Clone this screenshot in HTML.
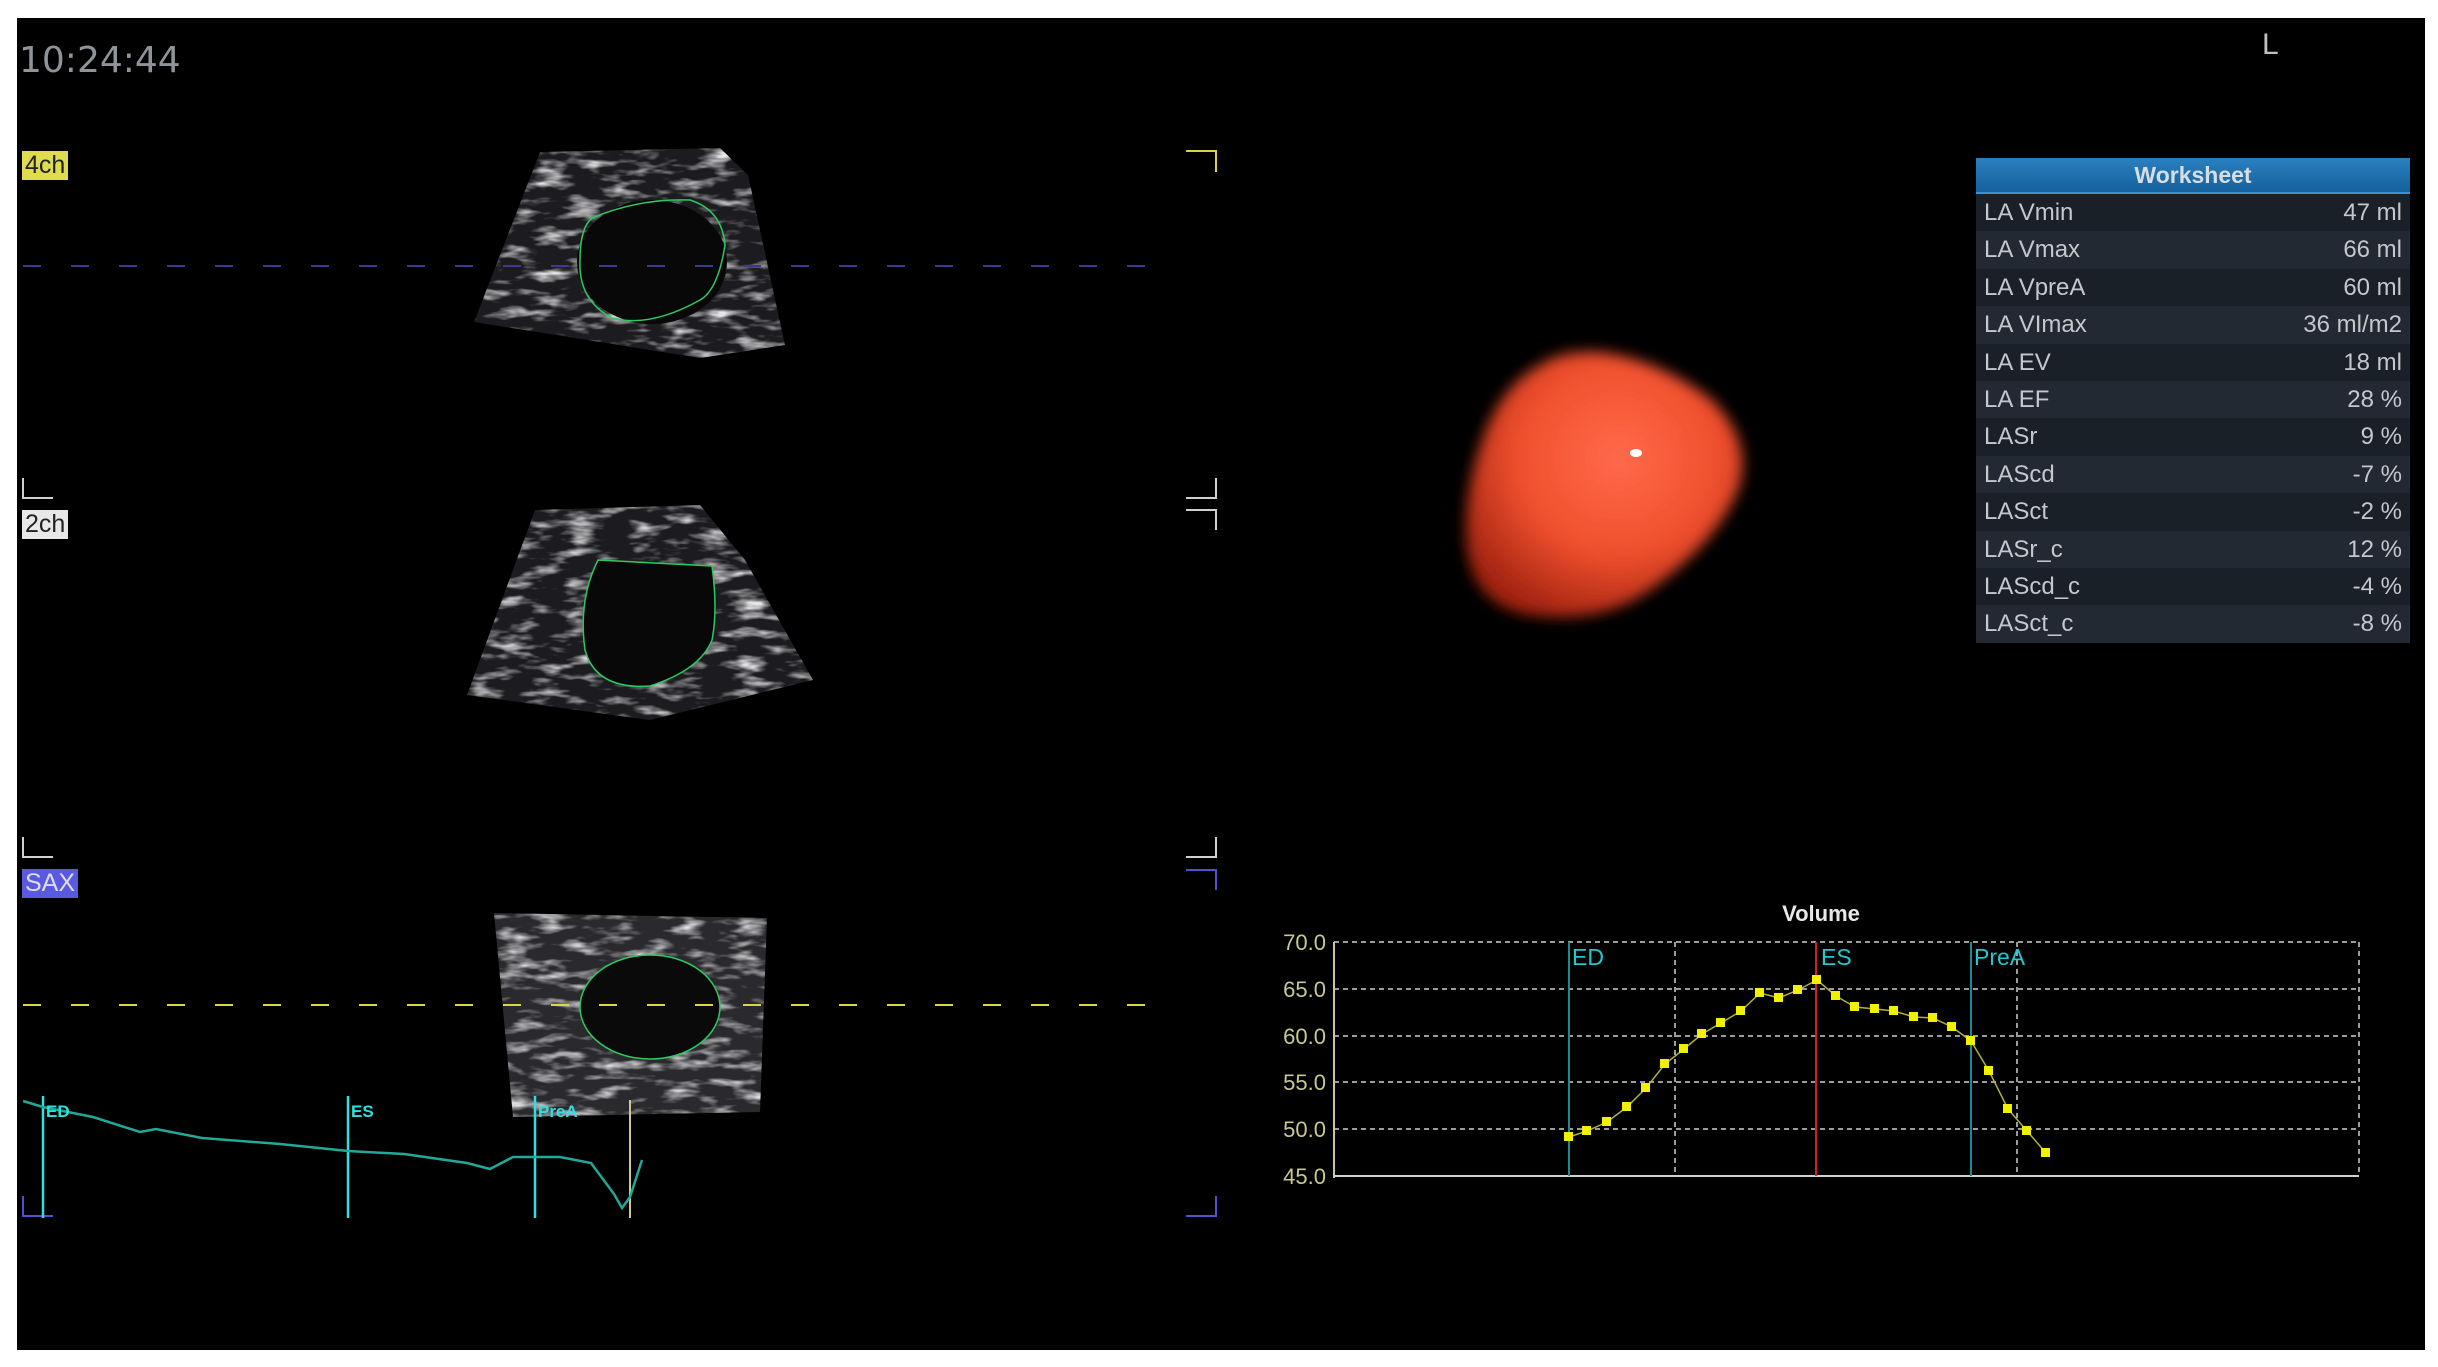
<!DOCTYPE html>
<html><head><meta charset="utf-8"><style>
html,body{margin:0;padding:0;background:#fff;}
#s{position:relative;width:2438px;height:1367px;background:#fff;overflow:hidden;font-family:"Liberation Sans",sans-serif;}
#b{position:absolute;left:17px;top:18px;width:2408px;height:1332px;background:#000;}
.lbl{position:absolute;font-size:25px;line-height:29px;padding:0 3px;color:#222;}
#ws{position:absolute;left:1976px;top:158px;width:434px;}
#ws .h{height:34px;background:linear-gradient(#2a80c0,#15609c);color:#d8dde2;font-weight:bold;text-align:center;font-size:23px;line-height:34px;border-bottom:2px solid #3a90d0;}
#ws .r{height:37.4px;line-height:37.4px;color:#c4c8cc;font-size:24px;padding:0 8px;display:flex;justify-content:space-between;}
#ws .r:nth-child(even){background:#1a2028}
#ws .r:nth-child(odd){background:#222932}
</style></head><body><div id="s"><div id="b"></div>
<svg width="2438" height="1367" style="position:absolute;left:0;top:0">
<defs>
<filter id="n" x="0" y="0" width="100%" height="100%"><feTurbulence type="fractalNoise" baseFrequency="0.03 0.1" numOctaves="3" seed="4"/><feColorMatrix type="matrix" values="0 0 0 0 0.8 0 0 0 0 0.8 0 0 0 0 0.82 0 0 0 2.6 -1.25"/></filter>
<filter id="bl"><feGaussianBlur stdDeviation="7"/></filter>
<radialGradient id="hg" cx="0.55" cy="0.4" r="0.65"><stop offset="0" stop-color="#ff6a4a"/><stop offset="0.55" stop-color="#f0502e"/><stop offset="1" stop-color="#a02210"/></radialGradient>
<clipPath id="c1"><polygon points="540,152 720,148 748,175 785,345 700,358 474,322"/></clipPath>
<clipPath id="c2"><polygon points="535,510 700,505 745,560 813,680 650,720 467,695"/></clipPath>
<clipPath id="c3"><polygon points="494,913 767,918 760,1112 513,1117"/></clipPath>
</defs>
<text x="19" y="72" fill="#8e949a" font-size="36" font-family="DejaVu Sans">10:24:44</text>
<text x="2262" y="54" fill="#c0c0c0" font-size="30" font-family="Liberation Sans">L</text>
<g clip-path="url(#c1)"><rect x="460" y="140" width="340" height="230" fill="#1c1c20"/><rect x="460" y="140" width="340" height="230" filter="url(#n)"/></g>
<ellipse cx="652" cy="262" rx="75" ry="62" fill="#080808"/>
<path d="M592 218 Q640 198 690 200 Q722 210 725 245 Q718 290 700 300 Q650 328 612 318 Q578 300 580 260 Q580 228 592 218Z" fill="none" stroke="#2ec860" stroke-width="1.5"/>
<g clip-path="url(#c2)"><rect x="460" y="500" width="360" height="230" fill="#1c1c20"/><rect x="460" y="500" width="360" height="230" filter="url(#n)"/></g>
<path d="M598 560 L712 566 Q718 610 712 640 Q700 670 650 686 Q596 690 585 650 Q578 600 598 560Z" fill="#080808" stroke="#2ec860" stroke-width="1.5"/>
<g clip-path="url(#c3)"><rect x="490" y="905" width="280" height="220" fill="#2a2a2e"/><rect x="490" y="905" width="280" height="220" filter="url(#n)"/></g>
<ellipse cx="650" cy="1007" rx="70" ry="52" fill="#0a0a0a" stroke="#2ec860" stroke-width="1.5"/>
<line x1="23" y1="266" x2="1174" y2="266" stroke="#3a3a90" stroke-width="2" stroke-dasharray="18 30"/>
<line x1="23" y1="1005" x2="1174" y2="1005" stroke="#d8d840" stroke-width="2" stroke-dasharray="18 30"/>
<g fill="none" stroke-width="2">
<path d="M1186 151 H1216 V172" stroke="#e0d040"/>
<path d="M23 478 V498 H53" stroke="#d0d0d0"/>
<path d="M1186 498 H1216 V478" stroke="#d0d0d0"/>
<path d="M1186 510 H1216 V530" stroke="#d0d0d0"/>
<path d="M23 837 V857 H53" stroke="#d0d0d0"/>
<path d="M1186 857 H1216 V837" stroke="#d0d0d0"/>
<path d="M1186 870 H1216 V890" stroke="#5050d0"/>
<path d="M23 1196 V1216 H53" stroke="#5050d0"/>
<path d="M1186 1216 H1216 V1196" stroke="#5050d0"/>
</g>
<g stroke="#30e0e0" stroke-width="2.5"><line x1="43" y1="1096" x2="43" y2="1218"/><line x1="348" y1="1096" x2="348" y2="1218"/><line x1="535" y1="1096" x2="535" y2="1218"/></g>
<line x1="630" y1="1100" x2="630" y2="1218" stroke="#d0c890" stroke-width="2"/>
<polyline points="23,1101 43,1107 93,1117 140,1132 156,1129 202,1138 280,1144 348,1151 404,1154 467,1163 490,1169 513,1157 560,1157 591,1163 614,1194 622,1208 630,1197 642,1160" fill="none" stroke="#20a898" stroke-width="2.5"/>
<g fill="#30e0e0" font-size="17" font-family="Liberation Sans" font-weight="bold"><text x="46" y="1117">ED</text><text x="351" y="1117">ES</text><text x="538" y="1117">PreA</text></g>
<path d="M1540 365 Q1560 350 1600 352 Q1660 360 1712 400 Q1752 440 1740 485 Q1720 540 1650 590 Q1600 625 1530 615 Q1470 605 1466 540 Q1464 480 1490 420 Q1510 380 1540 365Z" fill="url(#hg)" filter="url(#bl)"/>
<ellipse cx="1636" cy="453" rx="6" ry="4" fill="#fff"/>
<text x="1821" y="921" fill="#e8e8e8" font-size="22" text-anchor="middle" font-family="Liberation Sans" font-weight="bold">Volume</text>
<g stroke="#d0d0d0" stroke-width="1.5" stroke-dasharray="5 4" fill="none">
<line x1="1334" y1="942" x2="2359" y2="942"/><line x1="1334" y1="989" x2="2359" y2="989"/><line x1="1334" y1="1036" x2="2359" y2="1036"/><line x1="1334" y1="1082" x2="2359" y2="1082"/><line x1="1334" y1="1129" x2="2359" y2="1129"/>
<line x1="1675" y1="942" x2="1675" y2="1176"/><line x1="2017" y1="942" x2="2017" y2="1176"/><line x1="2359" y1="942" x2="2359" y2="1176"/>
</g>
<line x1="1334" y1="942" x2="1334" y2="1178" stroke="#c8c890" stroke-width="2"/>
<line x1="1334" y1="1176" x2="2359" y2="1176" stroke="#d0d0d0" stroke-width="2"/>
<g fill="#c8c890" font-size="22" font-family="Liberation Sans" text-anchor="end"><text x="1326" y="950">70.0</text><text x="1326" y="997">65.0</text><text x="1326" y="1044">60.0</text><text x="1326" y="1090">55.0</text><text x="1326" y="1137">50.0</text><text x="1326" y="1184">45.0</text></g>
<line x1="1569" y1="942" x2="1569" y2="1176" stroke="#208890" stroke-width="2"/>
<line x1="1816" y1="942" x2="1816" y2="1176" stroke="#d02020" stroke-width="2"/>
<line x1="1971" y1="942" x2="1971" y2="1176" stroke="#208890" stroke-width="2"/>
<g fill="#20c8d0" font-size="23" font-family="Liberation Sans"><text x="1572" y="965">ED</text><text x="1821" y="965">ES</text><text x="1974" y="965">PreA</text></g>
<polyline points="1569,1137 1587,1131 1607,1122 1627,1107 1646,1088 1665,1064 1684,1049 1702,1034 1721,1023 1741,1011 1760,993 1779,998 1798,990 1817,980 1836,996 1855,1007 1875,1009 1894,1011 1914,1017 1933,1018 1952,1027 1971,1041 1989,1071 2008,1109 2027,1131 2046,1153" fill="none" stroke="#b0b040" stroke-width="1.5"/>
<g fill="#f0f000">
<rect x="1564" y="1132" width="9" height="9"/><rect x="1582" y="1126" width="9" height="9"/><rect x="1602" y="1117" width="9" height="9"/><rect x="1622" y="1102" width="9" height="9"/><rect x="1641" y="1083" width="9" height="9"/><rect x="1660" y="1059" width="9" height="9"/><rect x="1679" y="1044" width="9" height="9"/><rect x="1697" y="1029" width="9" height="9"/><rect x="1716" y="1018" width="9" height="9"/><rect x="1736" y="1006" width="9" height="9"/><rect x="1755" y="988" width="9" height="9"/><rect x="1774" y="993" width="9" height="9"/><rect x="1793" y="985" width="9" height="9"/><rect x="1812" y="975" width="9" height="9"/><rect x="1831" y="991" width="9" height="9"/><rect x="1850" y="1002" width="9" height="9"/><rect x="1870" y="1004" width="9" height="9"/><rect x="1889" y="1006" width="9" height="9"/><rect x="1909" y="1012" width="9" height="9"/><rect x="1928" y="1013" width="9" height="9"/><rect x="1947" y="1022" width="9" height="9"/><rect x="1966" y="1036" width="9" height="9"/><rect x="1984" y="1066" width="9" height="9"/><rect x="2003" y="1104" width="9" height="9"/><rect x="2022" y="1126" width="9" height="9"/><rect x="2041" y="1148" width="9" height="9"/>
</g>
</svg>
<div class="lbl" style="left:22px;top:151px;background:#e0dc50;">4ch</div>
<div class="lbl" style="left:22px;top:510px;background:#e8e8e8;">2ch</div>
<div class="lbl" style="left:22px;top:869px;background:#5a5ae0;color:#dde;">SAX</div>
<div id="ws"><div class="h">Worksheet</div>
<div class="r"><span>LA Vmin</span><span>47 ml</span></div>
<div class="r"><span>LA Vmax</span><span>66 ml</span></div>
<div class="r"><span>LA VpreA</span><span>60 ml</span></div>
<div class="r"><span>LA VImax</span><span>36 ml/m2</span></div>
<div class="r"><span>LA EV</span><span>18 ml</span></div>
<div class="r"><span>LA EF</span><span>28 %</span></div>
<div class="r"><span>LASr</span><span>9 %</span></div>
<div class="r"><span>LAScd</span><span>-7 %</span></div>
<div class="r"><span>LASct</span><span>-2 %</span></div>
<div class="r"><span>LASr_c</span><span>12 %</span></div>
<div class="r"><span>LAScd_c</span><span>-4 %</span></div>
<div class="r"><span>LASct_c</span><span>-8 %</span></div>
</div>
</div></body></html>
